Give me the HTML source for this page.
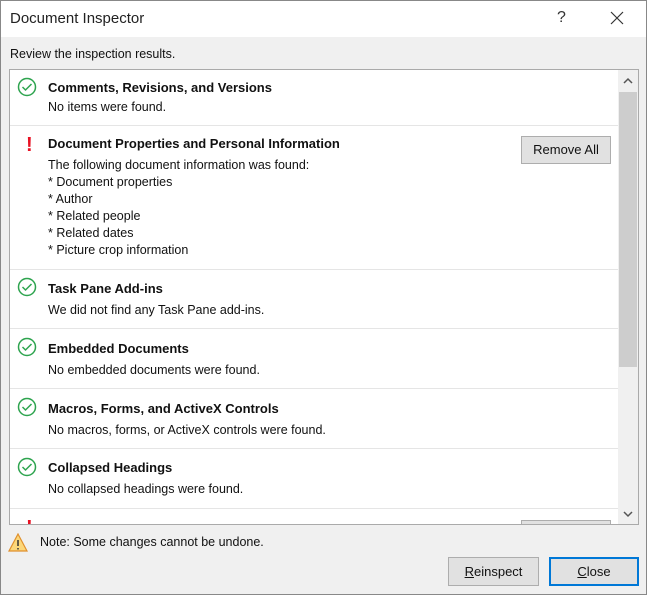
<!DOCTYPE html>
<html><head><style>
*{margin:0;padding:0;box-sizing:border-box}
body{width:647px;height:595px;background:#f0f0f0;font-family:"Liberation Sans",sans-serif;font-size:12.5px;color:#111;position:relative;overflow:hidden;border:1px solid #888}
.title{position:absolute;left:0;top:0;width:645px;height:36px;background:#fff}
.title span{position:absolute;left:9px;top:9px;font-size:15px;color:#222}
.q{position:absolute;left:556px;top:8px;font-size:16px;color:#333}
.x{position:absolute;left:608px;top:9px}
.lbl{position:absolute;left:9px;top:46px}
.list{position:absolute;left:8px;top:68px;width:630px;height:456px;background:#fff;border:1px solid #aaa;overflow:hidden}
.sb{position:absolute;right:0;top:0;width:20px;height:100%;background:#f0f0f0}
.thumb{position:absolute;left:1px;top:22px;width:18px;height:275px;background:#cdcdcd}
.row{position:absolute;left:0;width:608px;border-bottom:1px solid #e5e5e5}
.row b{position:absolute;left:38px;top:10px;font-size:13px}
.row p{position:absolute;left:38px;top:29px;line-height:17px}
.ic{position:absolute;left:7px;top:7px}
.ex{position:absolute;left:16px;top:8px;color:#e81123;font-size:20px;font-weight:bold}
.btn{position:absolute;background:#e1e1e1;border:1px solid #adadad;text-align:center;font-size:13px}
</style></head><body>
<div class="title"><span>Document Inspector</span><div class="q">?</div>
<svg class="x" width="16" height="16"><path d="M2 2L14 14M14 2L2 14" stroke="#333" stroke-width="1.2"/></svg></div>
<div class="lbl">Review the inspection results.</div>
<div class="list">
<div class="row" style="top:0;height:56px"><svg class="ic" width="20" height="20"><circle cx="10" cy="10" r="8.5" fill="none" stroke="#2ea44f" stroke-width="1.5"/><path d="M5.5 10l3 3 6-6" fill="none" stroke="#2ea44f" stroke-width="1.5"/></svg><b>Comments, Revisions, and Versions</b><p>No items were found.</p></div>
<div class="row" style="top:56px;height:144px"><div class="ex">!</div><b>Document Properties and Personal Information</b><p style="top:31px">The following document information was found:<br>* Document properties<br>* Author<br>* Related people<br>* Related dates<br>* Picture crop information</p>
<div class="btn" style="left:511px;top:10px;width:90px;height:28px;line-height:26px">Remove All</div></div>
<div class="row" style="top:200px;height:59px"><svg class="ic" width="20" height="20"><circle cx="10" cy="10" r="8.5" fill="none" stroke="#2ea44f" stroke-width="1.5"/><path d="M5.5 10l3 3 6-6" fill="none" stroke="#2ea44f" stroke-width="1.5"/></svg><b style="top:11px">Task Pane Add-ins</b><p style="top:32px">We did not find any Task Pane add-ins.</p></div>
<div class="row" style="top:259px;height:60px"><svg class="ic" width="20" height="20" style="top:8px"><circle cx="10" cy="10" r="8.5" fill="none" stroke="#2ea44f" stroke-width="1.5"/><path d="M5.5 10l3 3 6-6" fill="none" stroke="#2ea44f" stroke-width="1.5"/></svg><b style="top:12px">Embedded Documents</b><p style="top:33px">No embedded documents were found.</p></div>
<div class="row" style="top:319px;height:60px"><svg class="ic" width="20" height="20" style="top:8px"><circle cx="10" cy="10" r="8.5" fill="none" stroke="#2ea44f" stroke-width="1.5"/><path d="M5.5 10l3 3 6-6" fill="none" stroke="#2ea44f" stroke-width="1.5"/></svg><b style="top:12px">Macros, Forms, and ActiveX Controls</b><p style="top:33px">No macros, forms, or ActiveX controls were found.</p></div>
<div class="row" style="top:379px;height:60px"><svg class="ic" width="20" height="20" style="top:8px"><circle cx="10" cy="10" r="8.5" fill="none" stroke="#2ea44f" stroke-width="1.5"/><path d="M5.5 10l3 3 6-6" fill="none" stroke="#2ea44f" stroke-width="1.5"/></svg><b style="top:11px">Collapsed Headings</b><p style="top:32px">No collapsed headings were found.</p></div>
<div class="row" style="top:439px;height:60px;border:none"><div class="ex">!</div><b style="top:13px">Custom XML Data</b>
<div class="btn" style="left:511px;top:11px;width:90px;height:28px"></div></div>
<div class="sb"><svg style="position:absolute;left:5px;top:7px" width="10" height="8"><path d="M1 6l4-4 4 4" fill="none" stroke="#555" stroke-width="1.5"/></svg><div class="thumb"></div>
<svg style="position:absolute;left:5px;top:440px" width="10" height="8"><path d="M1 2l4 4 4-4" fill="none" stroke="#555" stroke-width="1.5"/></svg></div>
</div>
<svg style="position:absolute;left:7px;top:532px" width="20" height="19"><path d="M10 1L19 18H1Z" fill="#fcd77a" stroke="#e0902c" stroke-width="1.2"/><path d="M10 7v6M10 15v1.5" stroke="#333" stroke-width="1.5"/></svg>
<div style="position:absolute;left:39px;top:534px">Note: Some changes cannot be undone.</div>
<div class="btn" style="left:447px;top:556px;width:91px;height:29px;line-height:27px"><u>R</u>einspect</div>
<div class="btn" style="left:548px;top:556px;width:90px;height:29px;line-height:25px;border:2px solid #0078d7"><u>C</u>lose</div>
</body></html>
